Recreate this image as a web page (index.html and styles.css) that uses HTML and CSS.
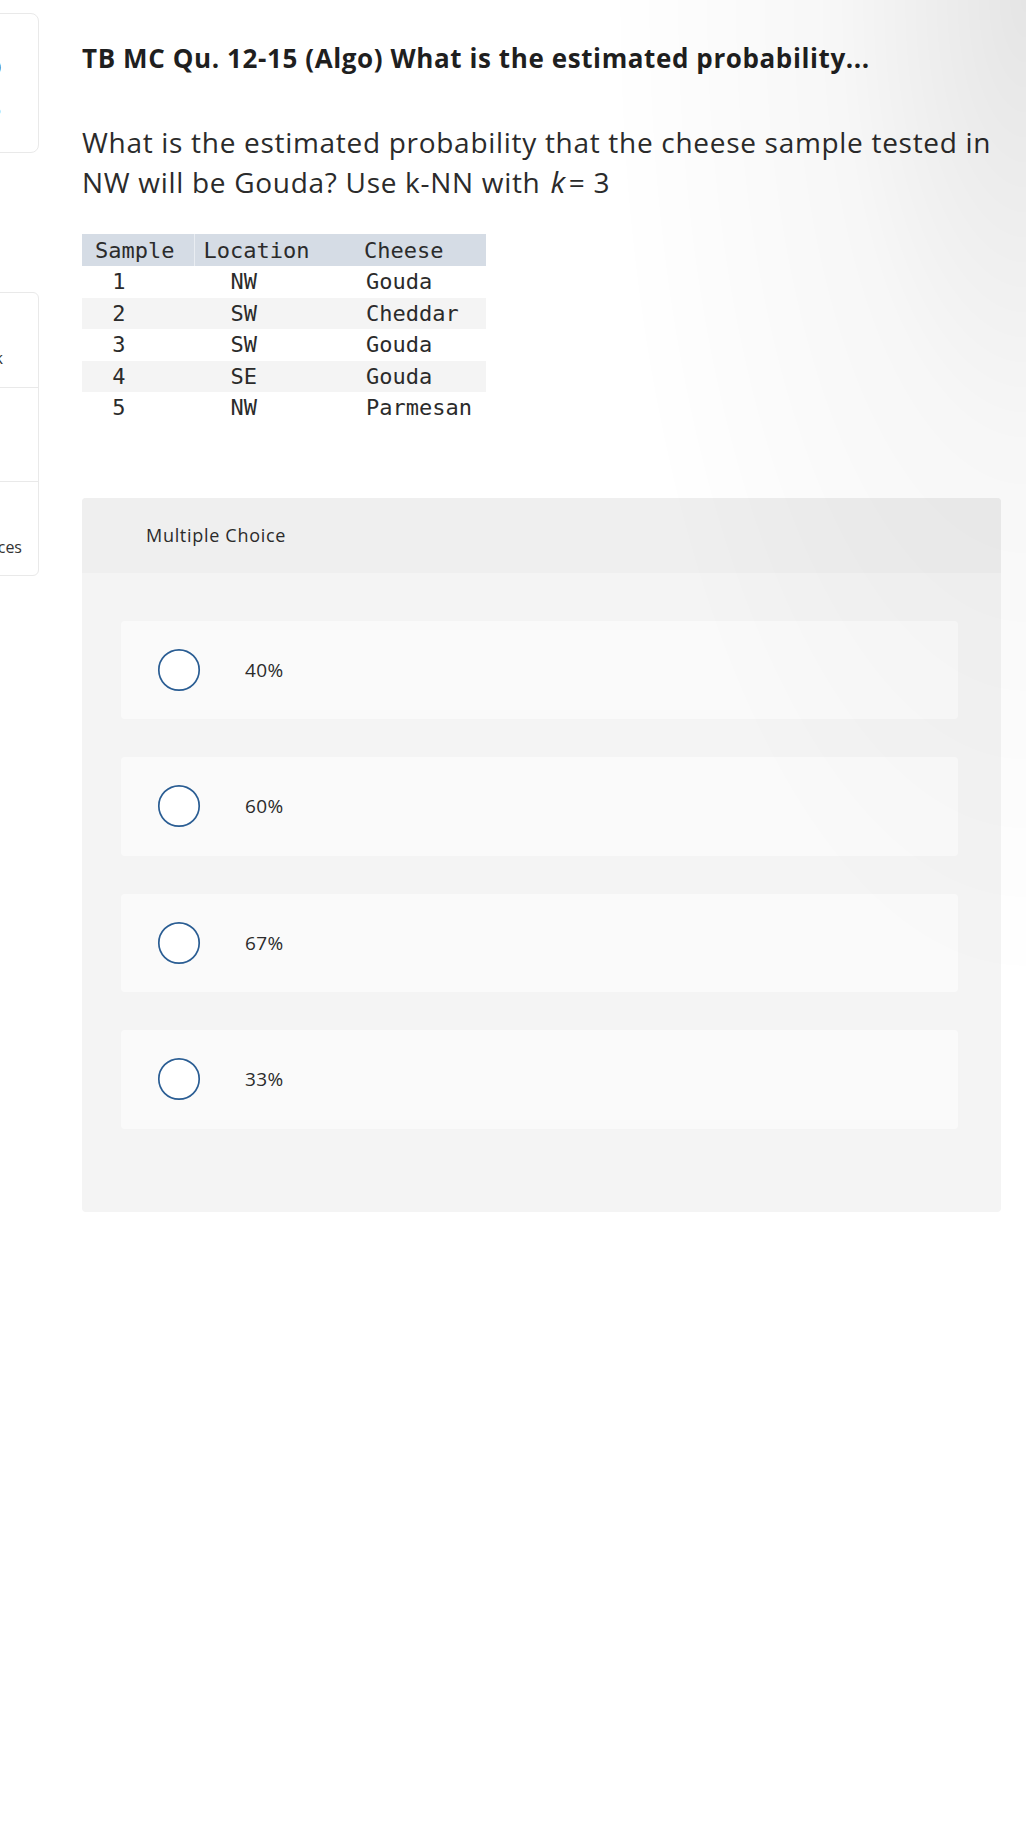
FILE: index.html
```html
<!DOCTYPE html>
<html lang="en">
<head>
<meta charset="utf-8">
<title>TB MC Qu. 12-15 (Algo)</title>
<link rel="stylesheet" href="styles.css">
</head>
<body>
<div class="page">
  <aside class="sidebar">
    <div class="score-card">
      <div class="score-num">10</div>
      <div class="score-mark">•</div>
    </div>
    <div class="tools">
      <div class="tool tool-check"><span class="tool-label">Check my work</span></div>
      <div class="tool tool-ebook"><span class="tool-label">eBook</span></div>
      <div class="tool tool-refs"><span class="tool-label">References</span></div>
    </div>
  </aside>
  <main class="main">
    <h1 class="q-title">TB MC Qu. 12-15 (Algo) What is the estimated probability...</h1>
    <p class="q-text">What is the estimated probability that the cheese sample tested in NW will be Gouda? Use k-NN with <span class="var">k</span>= 3</p>
    <table class="data">
      <thead>
        <tr><th class="c1">Sample</th><th class="c2">Location</th><th class="c3">Cheese</th></tr>
      </thead>
      <tbody>
        <tr><td class="c1"> 1</td><td class="c2">  NW</td><td class="c3">Gouda</td></tr>
        <tr><td class="c1"> 2</td><td class="c2">  SW</td><td class="c3">Cheddar</td></tr>
        <tr><td class="c1"> 3</td><td class="c2">  SW</td><td class="c3">Gouda</td></tr>
        <tr><td class="c1"> 4</td><td class="c2">  SE</td><td class="c3">Gouda</td></tr>
        <tr><td class="c1"> 5</td><td class="c2">  NW</td><td class="c3">Parmesan</td></tr>
      </tbody>
    </table>
    <section class="mc">
      <div class="mc-head">Multiple Choice</div>
      <div class="mc-body">
        <div class="choice"><svg class="radio" width="44" height="44" viewBox="0 0 44 44"><circle cx="22" cy="22" r="20.2" fill="#fff" stroke="#2a5d93" stroke-width="1.7"/></svg><span class="choice-text">40%</span></div>
        <div class="choice"><svg class="radio" width="44" height="44" viewBox="0 0 44 44"><circle cx="22" cy="22" r="20.2" fill="#fff" stroke="#2a5d93" stroke-width="1.7"/></svg><span class="choice-text">60%</span></div>
        <div class="choice"><svg class="radio" width="44" height="44" viewBox="0 0 44 44"><circle cx="22" cy="22" r="20.2" fill="#fff" stroke="#2a5d93" stroke-width="1.7"/></svg><span class="choice-text">67%</span></div>
        <div class="choice"><svg class="radio" width="44" height="44" viewBox="0 0 44 44"><circle cx="22" cy="22" r="20.2" fill="#fff" stroke="#2a5d93" stroke-width="1.7"/></svg><span class="choice-text">33%</span></div>
      </div>
    </section>
  </main>
</div>
</body>
</html>
```

FILE: styles.css
```css
html, body {
  margin: 0;
  padding: 0;
  background: #ffffff;
}

body {
  font-family: "Open Sans", "Lato", "Liberation Sans", sans-serif;
  color: #2b2b2b;
  min-height: 1836px;
  overflow: hidden;
}

body::after {
  content: "";
  position: fixed;
  top: 0;
  left: 0;
  right: 0;
  bottom: 0;
  pointer-events: none;
  background: radial-gradient(ellipse 420px 1000px at 100% 0, rgba(0, 0, 0, 0.1), rgba(0, 0, 0, 0.032) 45%, rgba(0, 0, 0, 0) 100%);
}

.page {
  display: flex;
  align-items: flex-start;
}

/* ---------- left sidebar (clipped by the viewport) ---------- */
.sidebar {
  flex: 0 0 220px;
  width: 220px;
  min-width: 0;
  margin-left: -181px;
  display: flex;
  flex-direction: column;
}

.score-card {
  margin-top: 13px;
  height: 140px;
  border: 1px solid #e9e9e9;
  border-radius: 8px;
  background: #fff;
  box-sizing: border-box;
  text-align: right;
  padding-right: 37px;
  padding-top: 42px;
  overflow: hidden;
}

.score-num {
  font-weight: 700;
  font-size: 18px;
  line-height: 22px;
  color: #222;
}

.score-mark {
  margin-top: 22px;
  font-weight: 700;
  font-size: 22px;
  line-height: 22px;
  color: #222;
}

.tools {
  margin-top: 139px;
  border: 1px solid #e9e9e9;
  border-radius: 0 6px 6px 0;
  background: #fff;
  overflow: hidden;
}

.tool {
  height: 94px;
  box-sizing: border-box;
  padding-top: 55px;
  text-align: right;
  font-size: 16px;
  line-height: 20px;
  color: #333;
  white-space: nowrap;
}

.tool + .tool {
  border-top: 1px solid #e9e9e9;
}

.tool-check { padding-right: 35px; }
.tool-ebook { padding-right: 60px; }
.tool-refs { padding-right: 16px; }

/* ---------- main column ---------- */
.main {
  margin-left: 43px;
  width: 919px;
  padding-top: 42px;
}

.q-title {
  margin: 0;
  font-size: 26px;
  line-height: 32px;
  font-weight: 700;
  letter-spacing: 0.6px;
  color: #1f1f1f;
}

.q-text {
  margin: 48px 0 0;
  font-size: 28px;
  line-height: 40px;
  font-weight: 400;
  letter-spacing: 0.7px;
  color: #2b2b2b;
}

.var {
  font-style: italic;
  font-size: 30px;
  margin-left: 2px;
  margin-right: 3px;
}

/* ---------- data table ---------- */
.data {
  margin-top: 32px;
  border-collapse: collapse;
  font-family: "DejaVu Sans Mono", "Liberation Mono", monospace;
  font-size: 22px;
  color: #2b2b2b;
  table-layout: fixed;
  width: 404px;
}

.data th,
.data td {
  padding: 0;
  text-align: left;
  font-weight: 400;
  white-space: pre;
}

.data th {
  background: #d5dce5;
  height: 32px;
}

.data td {
  height: 31.5px;
}

.data tbody tr:nth-child(even) td {
  background: #f4f4f4;
}

.data .c1 { width: 112px; padding-left: 13px; box-sizing: border-box; }
.data .c2 { width: 154px; padding-left: 9px; box-sizing: border-box; }
.data .c3 { width: 138px; padding-left: 16px; box-sizing: border-box; }
.data td.c1 { padding-left: 17px; }
.data td.c2 { padding-left: 10px; }
.data td.c3 { padding-left: 18px; }

.data th.c2 {
  border-left: 1px solid #e9edf2;
}

/* ---------- multiple choice panel ---------- */
.mc {
  margin-top: 74px;
  border-radius: 4px;
  overflow: hidden;
  background: #f4f4f4;
}

.mc-head {
  height: 75px;
  line-height: 75px;
  padding-left: 64px;
  background: #efefef;
  font-size: 18px;
  letter-spacing: 0.7px;
  color: #2b2b2b;
}

.mc-body {
  display: flex;
  flex-direction: column;
  gap: 38px;
  padding: 48px 43px 83px 39px;
}

.choice {
  height: 98.5px;
  display: flex;
  align-items: center;
  padding-left: 36px;
  background: #fafafa;
  border-radius: 4px;
}

.radio {
  flex: 0 0 44px;
  display: block;
}

.choice-text {
  margin-left: 44px;
  font-size: 19px;
  letter-spacing: 0.4px;
  color: #2b2b2b;
}
```
